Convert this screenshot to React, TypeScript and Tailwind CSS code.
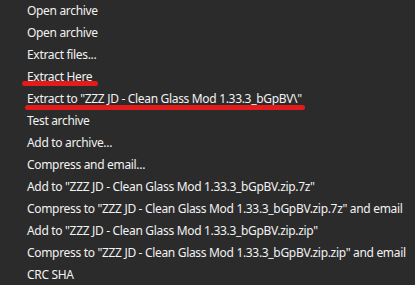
import React from "react";

const items = [
  "Open archive",
  "Open archive",
  "Extract files...",
  "Extract Here",
  'Extract to "ZZZ JD - Clean Glass Mod 1.33.3_bGpBV\\"',
  "Test archive",
  "Add to archive...",
  "Compress and email...",
  'Add to "ZZZ JD - Clean Glass Mod 1.33.3_bGpBV.zip.7z"',
  'Compress to "ZZZ JD - Clean Glass Mod 1.33.3_bGpBV.zip.7z" and email',
  'Add to "ZZZ JD - Clean Glass Mod 1.33.3_bGpBV.zip.zip"',
  'Compress to "ZZZ JD - Clean Glass Mod 1.33.3_bGpBV.zip.zip" and email',
  "CRC SHA",
];

export default function App() {
  return (
    <div
      className="w-[415px] h-[285px] bg-[#2b2b2b] overflow-hidden relative text-[#f2f2f2] text-[12px] tracking-[-0.32px]"
      style={{ fontFamily: '"Noto Sans", "Open Sans", sans-serif' }}
    >
      <div className="flex flex-col">
        {items.map((t, i) => (
          <div key={i} className="h-[22px] flex items-center pl-[27px] whitespace-nowrap leading-none">
            {t}
          </div>
        ))}
      </div>
      <div className="absolute left-[22px] top-[81px] w-[76px] h-[5px] rounded-full bg-[#e31b1b]" />
      <div className="absolute left-[25px] top-[105px] w-[280px] h-[5px] rounded-full bg-[#e31b1b]" />
    </div>
  );
}
